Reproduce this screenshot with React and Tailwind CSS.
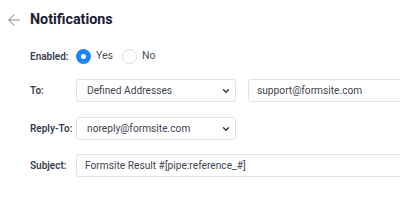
import { ArrowLeft, ChevronDown } from 'lucide-react';

function Select({ value, className = '' }) {
  return (
    <div
      className={`flex items-center justify-between h-[23px] border border-[#e1e3e8] rounded-[3px] bg-white pl-[10px] pr-[4px] text-[10.2px] text-[#3f4452] whitespace-nowrap ${className}`}
    >
      <span>{value}</span>
      <ChevronDown className="w-[10px] h-[10px] text-[#2a2f45]" strokeWidth={3.2} />
    </div>
  );
}

function Input({ value, className = '' }) {
  return (
    <div
      className={`flex items-center h-[23px] border border-[#e1e3e8] rounded-[3px] bg-white pl-[8px] text-[10.2px] text-[#3f4452] whitespace-nowrap ${className}`}
    >
      {value}
    </div>
  );
}

function Label({ children }) {
  return (
    <div className="w-[46px] shrink-0 whitespace-nowrap text-[10px] font-semibold text-[#3a3f50]">{children}</div>
  );
}

export default function App() {
  return (
    <div className="w-[400px] h-[200px] overflow-hidden bg-white" style={{ fontFamily: 'Roboto, "Noto Sans", sans-serif' }}>
      {/* Header */}
      <div className="flex items-center h-[22px] mt-[9px] pl-[5px]">
        <ArrowLeft className="w-[18px] h-[18px] text-[#8a8f9c]" strokeWidth={1.4} />
        <h1 className="ml-[7px] text-[14.3px] font-bold text-[#1d2133]">Notifications</h1>
      </div>

      <div className="pl-[30px]">
        {/* Enabled */}
        <div className="flex items-center mt-[15px] h-[20px]">
          <Label>Enabled:</Label>
          <div className="flex items-center">
            <span className="w-[15px] h-[15px] rounded-full bg-[#1a86f5] flex items-center justify-center">
              <span className="w-[5px] h-[5px] rounded-full bg-white" />
            </span>
            <span className="ml-[5px] text-[10.5px] text-[#4a4f5c]">Yes</span>
            <span className="ml-[9px] w-[15px] h-[15px] rounded-full border border-[#dcdee4] bg-white" />
            <span className="ml-[5px] text-[10.5px] text-[#4a4f5c]">No</span>
          </div>
        </div>

        {/* To */}
        <div className="flex items-center mt-[13px] h-[23px]">
          <Label>To:</Label>
          <Select value="Defined Addresses" className="w-[160px] shrink-0" />
          <Input value="support@formsite.com" className="ml-[12px] w-[200px] shrink-0" />
        </div>

        {/* Reply-To */}
        <div className="flex items-center mt-[15px] h-[23px]">
          <Label>Reply-To:</Label>
          <Select value="noreply@formsite.com" className="w-[160px] shrink-0" />
        </div>

        {/* Subject */}
        <div className="flex items-center mt-[14px] h-[23px]">
          <Label>Subject:</Label>
          <Input value="Formsite Result #[pipe:reference_#]" className="w-[360px] shrink-0" />
        </div>
      </div>
    </div>
  );
}
